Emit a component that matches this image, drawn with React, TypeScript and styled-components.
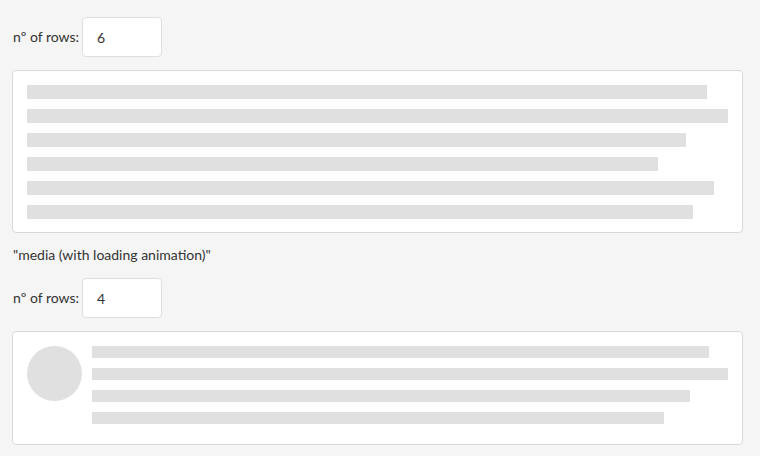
import { useState } from "react";
import styled, { createGlobalStyle } from "styled-components";

const GlobalStyle = createGlobalStyle`
  body {
    margin: 0;
    background-color: #f5f5f5;
    font-family: Lato, "Liberation Sans", sans-serif;
    font-size: 14px;
    line-height: 20px;
    color: #333;
  }
`;

const Page = styled.div`
  padding: 17px 17px 0 12px;
`;

const RowsField = styled.label`
  display: flex;
  align-items: center;
  gap: 3px;
  padding-left: 1px;
`;

const RowsInput = styled.input`
  box-sizing: border-box;
  width: 80px;
  height: 40px;
  padding: 0 14px;
  border: 1px solid #dedede;
  border-radius: 4px;
  background: #fff;
  font: inherit;
  color: #333;
  outline: none;
`;

const Card = styled.div<{ $media?: boolean }>`
  margin-top: 13px;
  background: #fff;
  border: 1px solid #d9d9d9;
  border-radius: 4px;
  padding: ${(p) => (p.$media ? "14px 14px 20px" : "14px 14px 13px")};
  display: flex;
  gap: 10px;
`;

const Lines = styled.div<{ $gap: number }>`
  flex: 1;
  display: flex;
  flex-direction: column;
  gap: ${(p) => p.$gap}px;
`;

const Line = styled.div<{ $height: number }>`
  height: ${(p) => p.$height}px;
  background: #e0e0e0;
`;

const Avatar = styled.div`
  flex: none;
  width: 55px;
  height: 55px;
  border-radius: 50%;
  background: #e0e0e0;
`;

const Caption = styled.p`
  margin: 12px 0 13px 1px;
`;

const paragraphWidths = [97, 100, 94, 90, 98, 95];
const mediaWidths = [97, 100, 94, 90];

function Placeholder({ rows, widths, height, gap }: { rows: number; widths: number[]; height: number; gap: number }) {
  return (
    <Lines $gap={gap}>
      {Array.from({ length: rows }).map((_, i) => (
        <Line key={i} $height={height} style={{ width: `${widths[i % widths.length]}%` }} />
      ))}
    </Lines>
  );
}

export default function App() {
  const [textRows, setTextRows] = useState("6");
  const [mediaRows, setMediaRows] = useState("4");

  return (
    <Page>
      <GlobalStyle />
      <RowsField>
        nº of rows:
        <RowsInput value={textRows} onChange={(e) => setTextRows(e.target.value)} />
      </RowsField>
      <Card>
        <Placeholder rows={Number(textRows) || 0} widths={paragraphWidths} height={14} gap={10} />
      </Card>

      <Caption>"media (with loading animation)"</Caption>
      <RowsField>
        nº of rows:
        <RowsInput value={mediaRows} onChange={(e) => setMediaRows(e.target.value)} />
      </RowsField>
      <Card $media>
        <Avatar />
        <Placeholder rows={Number(mediaRows) || 0} widths={mediaWidths} height={12} gap={10} />
      </Card>
    </Page>
  );
}
